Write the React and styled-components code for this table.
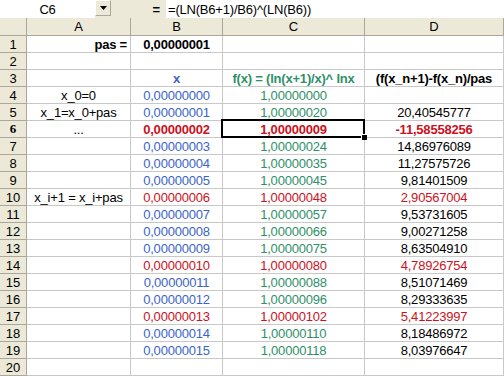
import React from 'react';
import styled, { createGlobalStyle, css } from 'styled-components';

const GlobalStyle = createGlobalStyle`
  html, body {
    margin: 0;
    padding: 0;
    background: #ffffff;
    overflow: hidden;
  }
  body {
    font-family: "Liberation Sans", Arial, sans-serif;
    font-size: 13px;
  }
`;

const Window = styled.div`
  width: 504px;
  height: 376px;
  overflow: hidden;
  background: #ffffff;
`;

const FormulaBar = styled.div`
  display: flex;
  height: 18px;
  background: #ece9d8;
`;

const NameBox = styled.div`
  width: 95px;
  display: flex;
  align-items: center;
  justify-content: center;
  background: #ffffff;
  color: #000;
  font-size: 13px;
  letter-spacing: -0.2px;
`;

const DropButton = styled.div`
  width: 16px;
  height: 16px;
  display: flex;
  align-items: center;
  justify-content: center;
  background: #ece9d8;
  border-top: 1px solid #ffffff;
  border-left: 1px solid #ffffff;
  border-right: 1px solid #aca899;
  border-bottom: 1px solid #aca899;
  box-sizing: border-box;
  margin-top: 0;
`;

const Gap = styled.div`
  width: 55px;
  display: flex;
  align-items: center;
  justify-content: flex-end;
  padding-right: 6px;
  box-sizing: border-box;
  font-weight: bold;
  font-size: 13px;
`;

const FormulaInput = styled.div`
  flex: 1;
  display: flex;
  align-items: center;
  padding-left: 2px;
  background: #ffffff;
  color: #000;
  font-size: 13px;
  letter-spacing: -0.2px;
`;

const Grid = styled.div`
  display: grid;
  grid-template-columns: 27px 104px 92px 142px 139px;
  grid-auto-rows: 17px;
  grid-template-rows: 18px;
`;

const Header = styled.div`
  display: flex;
  align-items: center;
  justify-content: center;
  background: #ece9d8;
  border-right: 1px solid #aca899;
  border-bottom: 1px solid #aca899;
  box-sizing: border-box;
  color: #000;
  font-size: 13px;
  font-weight: ${p => (p.$active ? 'bold' : 'normal')};
  font-family: ${p => (p.$active ? '"Liberation Serif", serif' : 'inherit')};
`;

const colors = {
  blue: '#3a64c8',
  green: '#2f9068',
  red: '#cc1122',
  black: '#000000',
};

const Cell = styled.div`
  position: relative;
  display: flex;
  align-items: center;
  justify-content: ${p => (p.$align === 'right' ? 'flex-end' : 'center')};
  padding: 0 3px;
  border-right: 1px solid #c8c8c8;
  border-bottom: 1px solid #c8c8c8;
  box-sizing: border-box;
  white-space: nowrap;
  overflow: visible;
  font-size: 13px;
  letter-spacing: -0.2px;
  color: ${p => colors[p.$color || 'black']};
  font-weight: ${p => (p.$bold ? 'bold' : 'normal')};
  ${p => p.$selected && css`
    &::after {
      content: '';
      position: absolute;
      left: -2px;
      top: -2px;
      right: -1px;
      bottom: -1px;
      border: 2px solid #000;
      pointer-events: none;
    }
    &::before {
      content: '';
      position: absolute;
      right: -3px;
      bottom: -3px;
      width: 5px;
      height: 5px;
      background: #000;
      border-left: 1px solid #fff;
      border-top: 1px solid #fff;
      z-index: 2;
    }
  `}
`;

const rows = [
  { a: 'pas =', aAlign: 'right', aBold: true, b: '0,00000001', bBold: true, bColor: 'black' },
  {},
  { b: 'x', bBold: true, c: 'f(x) = (ln(x+1)/x)^ lnx', cBold: true, d: '(f(x_n+1)-f(x_n)/pas', dBold: true },
  { a: 'x_0=0', b: '0,00000000', c: '1,00000000' },
  { a: 'x_1=x_0+pas', b: '0,00000001', c: '1,00000020', d: '20,40545777' },
  { a: '...', b: '0,00000002', c: '1,00000009', d: '-11,58558256', red: true, bold: true, active: true },
  { b: '0,00000003', c: '1,00000024', d: '14,86976089' },
  { b: '0,00000004', c: '1,00000035', d: '11,27575726' },
  { b: '0,00000005', c: '1,00000045', d: '9,81401509' },
  { a: 'x_i+1 = x_i+pas', b: '0,00000006', c: '1,00000048', d: '2,90567004', red: true },
  { b: '0,00000007', c: '1,00000057', d: '9,53731605' },
  { b: '0,00000008', c: '1,00000066', d: '9,00271258' },
  { b: '0,00000009', c: '1,00000075', d: '8,63504910' },
  { b: '0,00000010', c: '1,00000080', d: '4,78926754', red: true },
  { b: '0,00000011', c: '1,00000088', d: '8,51071469' },
  { b: '0,00000012', c: '1,00000096', d: '8,29333635' },
  { b: '0,00000013', c: '1,00000102', d: '5,41223997', red: true },
  { b: '0,00000014', c: '1,00000110', d: '8,18486972' },
  { b: '0,00000015', c: '1,00000118', d: '8,03976647' },
  {},
];

const DropArrow = () => (
  <svg width="7" height="4" viewBox="0 0 7 4">
    <path d="M0 0h7L3.5 4z" fill="#000" />
  </svg>
);

export default function App() {
  return (
    <Window>
      <GlobalStyle />
      <FormulaBar>
        <NameBox>C6</NameBox>
        <DropButton>
          <DropArrow />
        </DropButton>
        <Gap>=</Gap>
        <FormulaInput>=(LN(B6+1)/B6)^(LN(B6))</FormulaInput>
      </FormulaBar>
      <Grid>
        <Header />
        <Header>A</Header>
        <Header>B</Header>
        <Header>C</Header>
        <Header>D</Header>
        {rows.map((r, i) => (
          <React.Fragment key={i}>
            <Header $active={r.active}>{i + 1}</Header>
            <Cell $align={r.aAlign} $bold={r.aBold}>{r.a}</Cell>
            <Cell
              $color={r.bColor || (r.red ? 'red' : 'blue')}
              $bold={r.bBold || r.bold}
            >
              {r.b}
            </Cell>
            <Cell
              $color={r.red ? 'red' : 'green'}
              $bold={r.cBold || r.bold}
              $selected={r.active}
            >
              {r.c}
            </Cell>
            <Cell $color={r.red ? 'red' : 'black'} $bold={r.dBold || r.bold}>
              {r.d}
            </Cell>
          </React.Fragment>
        ))}
      </Grid>
    </Window>
  );
}
